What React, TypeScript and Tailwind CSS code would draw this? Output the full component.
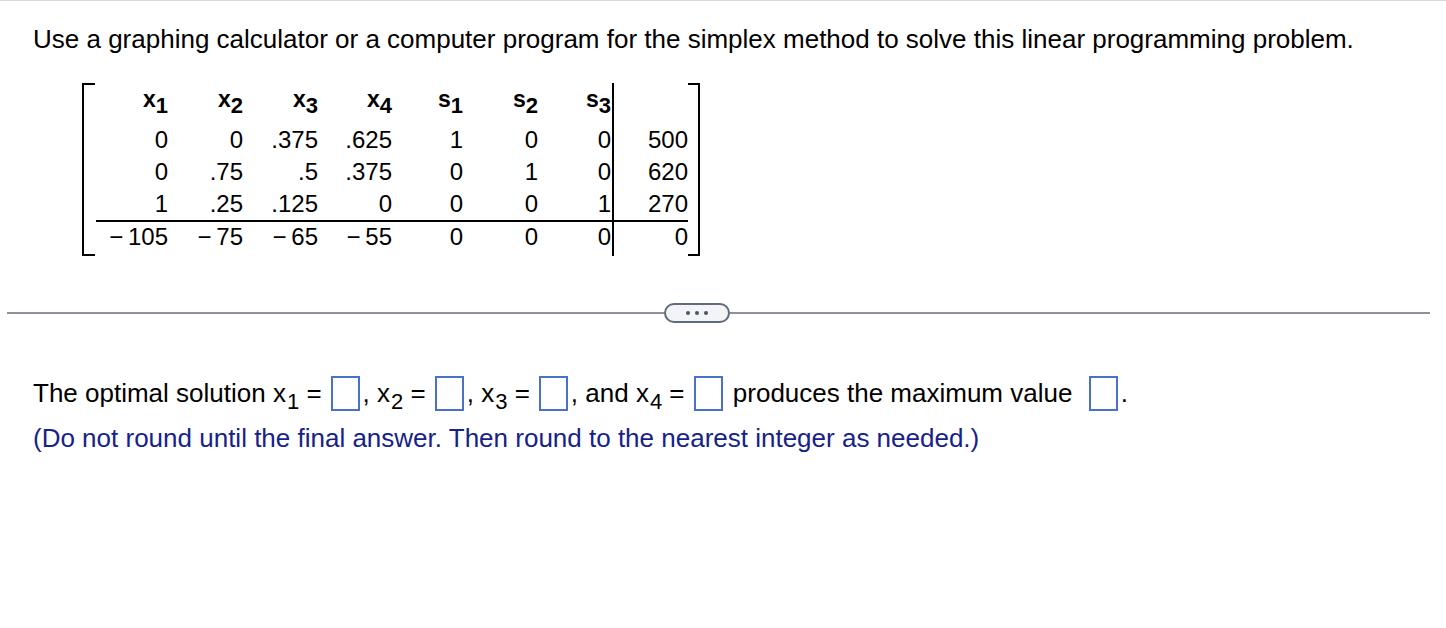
import React from "react";

const header = [
  ["x", "1"],
  ["x", "2"],
  ["x", "3"],
  ["x", "4"],
  ["s", "1"],
  ["s", "2"],
  ["s", "3"],
];

const rows = [
  ["0", "0", ".375", ".625", "1", "0", "0", "500"],
  ["0", ".75", ".5", ".375", "0", "1", "0", "620"],
  ["1", ".25", ".125", "0", "0", "0", "1", "270"],
];

const lastRow = ["\u2212\u2009105", "\u2212\u200975", "\u2212\u200965", "\u2212\u200955", "0", "0", "0", "0"];

const widths = ["w-[72px]", "w-[75px]", "w-[75px]", "w-[74px]", "w-[71px]", "w-[75px]", "w-[76px]", "w-[74px]"];

const Box = () => (
  <span className="inline-block align-middle w-[29px] h-[35px] border-2 border-[#4a72c9] ml-[9px] mr-[3px] relative -top-[2px]" />
);

const Sub = ({ children }: { children: React.ReactNode }) => (
  <span className="text-[22px] relative top-[7px] ml-[1px]">{children}</span>
);

const Matrix = () => {
  return (
    <div className="flex ml-[82px] mt-[29px] h-[173px]">
      <div className="w-[13px] border-l-2 border-y-2 border-black" />
      <div className="ml-[1px] flex flex-col">
        <div className="flex h-[42px] font-bold text-[23px] leading-[32px]">
          {header.map(([v, s], i) => (
            <div key={i} className={`${widths[i]} text-right ${i === 6 ? "border-r-2 border-black pr-[1px]" : ""}`}>
              {v}
              <span className="text-[22px] relative top-[6px]">{s}</span>
            </div>
          ))}
          <div className={widths[7]} />
        </div>
        {rows.map((r, ri) => (
          <div key={ri} className={`flex text-[24px] leading-[30px] ${ri === 2 ? "h-[31px]" : "h-[32px]"}`}>
            {r.map((c, ci) => (
              <div key={ci} className={`${widths[ci]} text-right ${ci === 6 ? "border-r-2 border-black pr-[1px]" : ""}`}>
                {c}
              </div>
            ))}
          </div>
        ))}
        <div className="flex text-[24px] leading-[30px] flex-1 border-t-2 border-black">
          {lastRow.map((c, ci) => (
            <div key={ci} className={`${widths[ci]} text-right ${ci === 6 ? "border-r-2 border-black pr-[1px]" : ""}`}>
              {c}
            </div>
          ))}
        </div>
      </div>
      <div className="w-[12px] border-r-2 border-y-2 border-black" />
    </div>
  );
};

const App = () => {
  return (
    <div className="min-h-screen bg-white border-t border-[#d3d9e2] font-['Liberation_Sans',Arial,sans-serif] text-black">
      <p className="pl-[33px] pt-[23px] text-[26px] leading-[30px]">
        Use a graphing calculator or a computer program for the simplex method to solve this linear programming problem.
      </p>

      <Matrix />

      <div className="flex items-center pl-[7px] pr-[16px] mt-[47px]">
        <div className="h-[2px] w-[657px] bg-[#8b929e]" />
        <div className="w-[66px] h-[20px] rounded-full border-2 border-[#5f6b7b] bg-[#f3f4f6] flex items-center justify-center gap-[5px]">
          <span className="w-[4px] h-[4px] rounded-full bg-[#4b5563]" />
          <span className="w-[4px] h-[4px] rounded-full bg-[#4b5563]" />
          <span className="w-[4px] h-[4px] rounded-full bg-[#4b5563]" />
        </div>
        <div className="h-[2px] flex-1 bg-[#8b929e]" />
      </div>

      <div className="pl-[33px] mt-[50px] text-[26px]">
        <p className="leading-[40px]">
          The optimal solution x<Sub>1</Sub> =<Box />, x<Sub>2</Sub> =<Box />, x<Sub>3</Sub> =<Box />, and x<Sub>4</Sub> =<Box />{" "}
          produces the maximum value <Box />.
        </p>
        <p className="leading-[40px] mt-[3px] text-[#16228a]">
          (Do not round until the final answer. Then round to the nearest integer as needed.)
        </p>
      </div>
    </div>
  );
};

export default App;
